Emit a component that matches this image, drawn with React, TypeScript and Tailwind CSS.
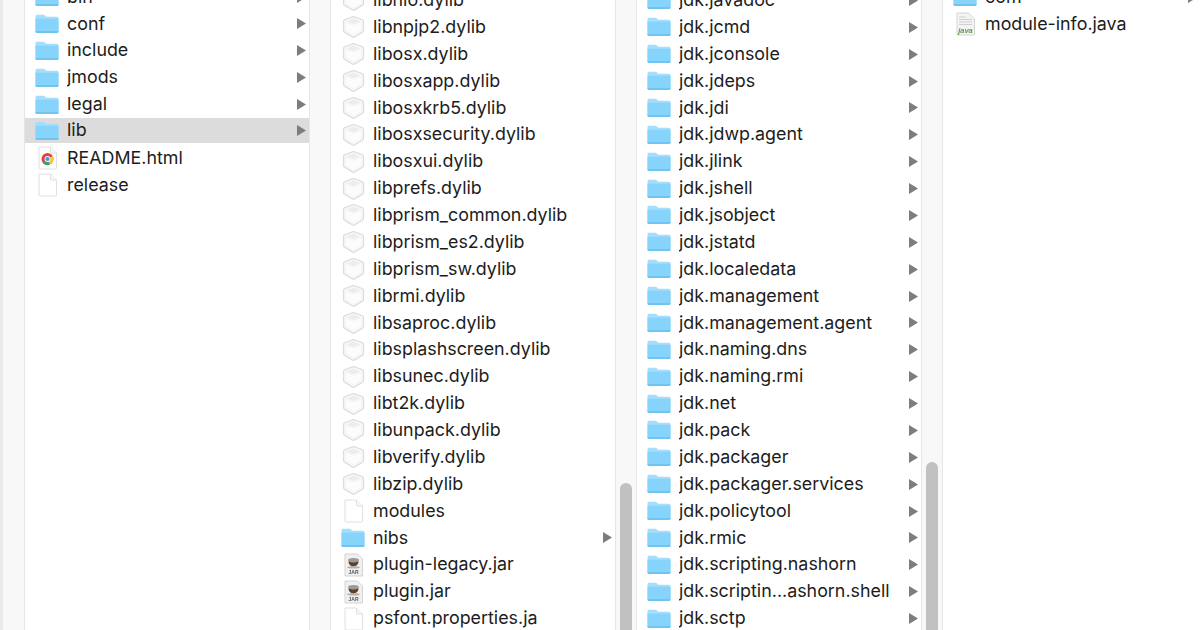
type Kind = 'folder' | 'dylib' | 'page' | 'jar' | 'chrome' | 'java';

type Item = {
  name: string;
  kind: Kind;
  selected?: boolean;
};

const folder = (name: string): Item => ({ name, kind: 'folder' });
const dylib = (name: string): Item => ({ name: `${name}.dylib`, kind: 'dylib' });

const col1: Item[] = [
  folder('bin'),
  folder('conf'),
  folder('include'),
  folder('jmods'),
  folder('legal'),
  { name: 'lib', kind: 'folder', selected: true },
  { name: 'README.html', kind: 'chrome' },
  { name: 'release', kind: 'page' },
];

const col2: Item[] = [
  dylib('libnio'),
  dylib('libnpjp2'),
  dylib('libosx'),
  dylib('libosxapp'),
  dylib('libosxkrb5'),
  dylib('libosxsecurity'),
  dylib('libosxui'),
  dylib('libprefs'),
  dylib('libprism_common'),
  dylib('libprism_es2'),
  dylib('libprism_sw'),
  dylib('librmi'),
  dylib('libsaproc'),
  dylib('libsplashscreen'),
  dylib('libsunec'),
  dylib('libt2k'),
  dylib('libunpack'),
  dylib('libverify'),
  dylib('libzip'),
  { name: 'modules', kind: 'page' },
  folder('nibs'),
  { name: 'plugin-legacy.jar', kind: 'jar' },
  { name: 'plugin.jar', kind: 'jar' },
  { name: 'psfont.properties.ja', kind: 'page' },
];

const col3: Item[] = [
  'jdk.javadoc',
  'jdk.jcmd',
  'jdk.jconsole',
  'jdk.jdeps',
  'jdk.jdi',
  'jdk.jdwp.agent',
  'jdk.jlink',
  'jdk.jshell',
  'jdk.jsobject',
  'jdk.jstatd',
  'jdk.localedata',
  'jdk.management',
  'jdk.management.agent',
  'jdk.naming.dns',
  'jdk.naming.rmi',
  'jdk.net',
  'jdk.pack',
  'jdk.packager',
  'jdk.packager.services',
  'jdk.policytool',
  'jdk.rmic',
  'jdk.scripting.nashorn',
  'jdk.scriptin...ashorn.shell',
  'jdk.sctp',
].map(folder);

const col4: Item[] = [folder('com'), { name: 'module-info.java', kind: 'java' }];

function FolderIcon() {
  return (
    <svg width="24" height="20" viewBox="0 0 24 20">
      <path d="M.5 2.500C.5 1.400 1.200.8 2.300.8h6c.9 0 1.300.3 1.900 1l.8 1h10.900c1 0 1.600.7 1.600 1.700v12.800c0 1-.7 1.600-1.600 1.600H2.100c-1 0-1.600-.7-1.600-1.600z" fill="#a5defc" />
      <path d="M.5 4.800h23v12.500c0 1-.7 1.600-1.600 1.600H2.100c-1 0-1.600-.7-1.600-1.600z" fill="#86d4fc" />
      <path d="M.5 17.400c0 .9.700 1.500 1.600 1.500h19.800c.9 0 1.600-.6 1.600-1.500v-.5H.5z" fill="#6fc4f2" />
    </svg>
  );
}

function DylibIcon() {
  return (
    <svg width="24" height="24" viewBox="0 0 24 24">
      <path d="M12.500 1.500 Q12.500 1.500 14 2 L21 4.500Q22.500 5 22.500 6.500V15.500Q22.500 16.700 21.500 17.300L13.500 22Q12.500 22.600 11.500 22L3.500 17.300Q2.500 16.700 2.500 15.500V6.500Q2.500 5 4 4.500L11 2Q12.500 1.500 12.500 1.500z" fill="#f6f6f6" stroke="#dcdcdc" strokeWidth="1.200" />
      <path d="M12.500 3.800 19 6.400 12.500 9 6 6.400z" fill="#ececec" />
      <path d="M5 8 12.500 10.800 20 8V15L12.500 19.800 5 15z" fill="#fcfcfc" />
    </svg>
  );
}

function PageIcon({ children }: { children?: React.ReactNode }) {
  return (
    <svg width="24" height="24" viewBox="0 0 24 24">
      <path d="M4 1h11.500L21.500 7v15a1 1 0 0 1-1 1H5a1 1 0 0 1-1-1z" fill="#fff" stroke="#e0e0e0" strokeWidth="1" strokeLinejoin="round" />
      <path d="M15.500 1v5a1 1 0 0 0 1 1h5" fill="#f6f6f6" stroke="#e0e0e0" strokeWidth="1" strokeLinejoin="round" />
      {children}
    </svg>
  );
}

function ChromeIcon() {
  return (
    <PageIcon>
      <circle cx="12.500" cy="13" r="6" fill="#d9473c" />
      <path d="M12.500 13 7.300 16a6 6 0 0 0 7.500 2.500z" fill="#3f9f52" />
      <path d="M12.500 13 14.800 18.500A6 6 0 0 0 18.500 13c0-1.100-.3-2-.8-3z" fill="#f6c83f" />
      <circle cx="12.500" cy="13" r="2.900" fill="#fff" />
      <circle cx="12.500" cy="13" r="2.100" fill="#4c8bf0" />
    </PageIcon>
  );
}

function JarIcon() {
  return (
    <svg width="24" height="24" viewBox="0 0 24 24">
      <path d="M4 1h12.500L21.500 6v17H4z" fill="#f0f0f0" stroke="#d4d4d4" strokeWidth="1" strokeLinejoin="round" />
      <ellipse cx="12.500" cy="7" rx="5.500" ry="2" fill="#9a9a9a" />
      <path d="M7.500 8c0 3.800 2.200 5.200 5 5.200s5-1.400 5-5.200c-1.400.9-3 1.200-5 1.200S8.900 8.900 7.500 8z" fill="#5f3f27" />
      <ellipse cx="12.500" cy="14.300" rx="6.500" ry="1.300" fill="#b0b0b0" />
      <text x="12.500" y="21" textAnchor="middle" fontSize="5" fontWeight="700" fontFamily="'Liberation Sans', sans-serif" fill="#555">JAR</text>
    </svg>
  );
}

function JavaIcon() {
  return (
    <svg width="24" height="24" viewBox="0 0 24 24">
      <path d="M4 1h11.500L21.500 7v15a1 1 0 0 1-1 1H5a1 1 0 0 1-1-1z" fill="#f4f4f4" stroke="#d4d4d4" strokeWidth="1" strokeLinejoin="round" />
      <path d="M6 5h7M6 7.500h13M6 10h13M6 12.500h13" stroke="#d0d0d0" strokeWidth="1" />
      <text x="12.500" y="20.500" textAnchor="middle" fontSize="7.500" fontWeight="700" fontStyle="italic" fontFamily="'Liberation Sans', sans-serif" fill="#5f9a4d">java</text>
    </svg>
  );
}

function RowIcon({ kind }: { kind: Kind }) {
  if (kind === 'folder') return <FolderIcon />;
  if (kind === 'dylib') return <DylibIcon />;
  if (kind === 'jar') return <JarIcon />;
  if (kind === 'chrome') return <ChromeIcon />;
  if (kind === 'java') return <JavaIcon />;
  return <PageIcon />;
}

function Row({ item }: { item: Item }) {
  return (
    <div className={`flex items-center pl-[10px] pr-[3px] ${item.selected ? 'mb-[1.38px] h-[25.5px] bg-[#dcdcdc]' : 'h-[26.88px]'}`}>
      <span className="flex w-[24px] shrink-0 justify-center blur-[0.4px]">
        <RowIcon kind={item.kind} />
      </span>
      <span className="ml-[8px] flex-1 truncate">{item.name}</span>
      {item.kind === 'folder' && (
        <svg width="9" height="11" viewBox="0 0 9 11" className="shrink-0">
          <path d="M0 0 9 5.500 0 11z" fill="#7d7d7d" />
        </svg>
      )}
    </div>
  );
}

function Column({ items, top, width }: { items: Item[]; top: string; width: string }) {
  return (
    <div className={`h-full shrink-0 overflow-hidden bg-white ${width}`}>
      <div className={top}>
        {items.map((item) => (
          <Row key={item.name} item={item} />
        ))}
      </div>
    </div>
  );
}

function Lane({ thumbTop }: { thumbTop?: string }) {
  return (
    <div className="flex h-full w-[22px] shrink-0 justify-center border-x border-[#e6e6e6] bg-[#f8f8f8]">
      {thumbTop && <div className={`h-[400px] w-[12px] rounded-full bg-[#c1c1c1] ${thumbTop}`} />}
    </div>
  );
}

export default function App() {
  return (
    <div
      className="flex h-[630px] w-[1200px] overflow-hidden bg-white text-[17.85px] text-[#1c1c1c]"
      style={{ fontFamily: 'Inter, "Liberation Sans", sans-serif' }}
    >
      <div className="h-full w-[3px] shrink-0 bg-[#e9e9e9]" />
      <div className="h-full w-[22px] shrink-0 border-r border-[#e6e6e6] bg-[#f8f8f8]" />
      <Column items={col1} top="-mt-[16.4px]" width="w-[284px]" />
      <Lane />
      <Column items={col2} top="-mt-[13px]" width="w-[284px]" />
      <Lane thumbTop="mt-[483px]" />
      <Column items={col3} top="-mt-[13px]" width="w-[284px]" />
      <Lane thumbTop="mt-[462px]" />
      <Column items={col4} top="-mt-[16.4px]" width="flex-1" />
    </div>
  );
}
